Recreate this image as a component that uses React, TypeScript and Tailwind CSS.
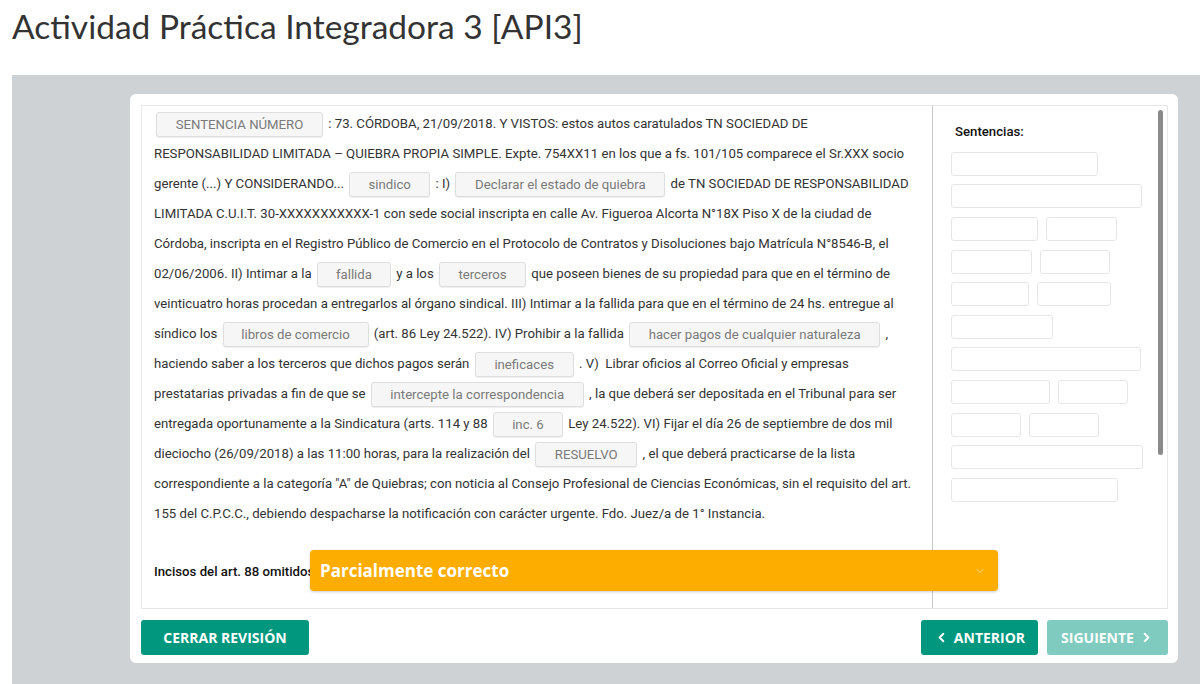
import React from "react";
import { ChevronDown, ChevronLeft, ChevronRight } from "lucide-react";

function Blank({ w, children }: { w: string; children: React.ReactNode }) {
  return (
    <span
      className={`${w} inline-block h-[25px] mx-[2px] rounded-[3px] border border-[#dedede] bg-[#f6f6f6] text-center leading-[23px] text-[#7a7a7a] align-middle shadow-[0_1px_1px_rgba(0,0,0,0.07)]`}
    >
      {children}
    </span>
  );
}

function Line({ children }: { children: React.ReactNode }) {
  return <div className="h-[30px] leading-[30px] whitespace-nowrap">{children}</div>;
}

const rows: string[][] = [
  ["w-[147px]"],
  ["w-[191px]"],
  ["w-[87px]", "w-[71px]"],
  ["w-[81px]", "w-[70px]"],
  ["w-[78px]", "w-[74px]"],
  ["w-[102px]"],
  ["w-[190px]"],
  ["w-[99px]", "w-[70px]"],
  ["w-[70px]", "w-[70px]"],
  ["w-[192px]"],
  ["w-[167px]"],
];

export default function App() {
  return (
    <div className="w-[1200px] h-[684px] overflow-hidden bg-white">
      <h1 className="pl-[12px] pt-[1px] h-[75px] font-['Lato',sans-serif] text-[33.5px] text-[#333333]">
        Actividad Práctica Integradora 3 [API3]
      </h1>

      <div className="ml-[12px] h-[609px] bg-[#cfd2d4] pt-[19px] pl-[118px]">
        <div className="w-[1048px] rounded-[6px] bg-white pt-[11px] pl-[11px] pr-[10px] pb-[8px]">
          {/* question box */}
          <div className="flex h-[504px] border border-[#e8e8e8] font-['Roboto',sans-serif] text-[13.2px] text-[#333333]">
            <div className="relative w-[791px] border-r border-[#c9c9c9] pl-[12px] pt-[3px]">
              <Line>
                <Blank w="w-[167px]">SENTENCIA NÚMERO</Blank> : 73. CÓRDOBA, 21/09/2018. Y VISTOS: estos autos caratulados TN SOCIEDAD DE
              </Line>
              <Line>
                RESPONSABILIDAD LIMITADA – QUIEBRA PROPIA SIMPLE. Expte. 754XX11 en los que a fs. 101/105 comparece el Sr.XXX socio
              </Line>
              <Line>
                gerente (...) Y CONSIDERANDO... <Blank w="w-[81px]">sindico</Blank> : I){" "}
                <Blank w="w-[210px]">Declarar el estado de quiebra</Blank> de TN SOCIEDAD DE RESPONSABILIDAD
              </Line>
              <Line>
                LIMITADA C.U.I.T. 30-XXXXXXXXXXX-1 con sede social inscripta en calle Av. Figueroa Alcorta N°18X Piso X de la ciudad de
              </Line>
              <Line>
                Córdoba, inscripta en el Registro Público de Comercio en el Protocolo de Contratos y Disoluciones bajo Matrícula N°8546-B, el
              </Line>
              <Line>
                02/06/2006. II) Intimar a la <Blank w="w-[74px]">fallida</Blank> y a los{" "}
                <Blank w="w-[87px]">terceros</Blank> que poseen bienes de su propiedad para que en el término de
              </Line>
              <Line>
                veinticuatro horas procedan a entregarlos al órgano sindical. III) Intimar a la fallida para que en el término de 24 hs. entregue al
              </Line>
              <Line>
                síndico los <Blank w="w-[146px]">libros de comercio</Blank> (art. 86 Ley 24.522). IV) Prohibir a la fallida{" "}
                <Blank w="w-[251px]">hacer pagos de cualquier naturaleza</Blank> ,
              </Line>
              <Line>
                haciendo saber a los terceros que dichos pagos serán <Blank w="w-[99px]">ineficaces</Blank> . V)&nbsp; Librar oficios al Correo Oficial y empresas
              </Line>
              <Line>
                prestatarias privadas a fin de que se <Blank w="w-[213px]">intercepte la correspondencia</Blank> , la que deberá ser depositada en el Tribunal para ser
              </Line>
              <Line>
                entregada oportunamente a la Sindicatura (arts. 114 y 88 <Blank w="w-[70px]">inc. 6</Blank> Ley 24.522). VI) Fijar el día 26 de septiembre de dos mil
              </Line>
              <Line>
                dieciocho (26/09/2018) a las 11:00 horas, para la realización del <Blank w="w-[102px]">RESUELVO</Blank> , el que deberá practicarse de la lista
              </Line>
              <Line>
                correspondiente a la categoría "A" de Quiebras; con noticia al Consejo Profesional de Ciencias Económicas, sin el requisito del art.
              </Line>
              <Line>155 del C.P.C.C., debiendo despacharse la notificación con carácter urgente. Fdo. Juez/a de 1° Instancia.</Line>

              <div className="mt-[28px] h-[30px] leading-[30px] font-medium text-[#111]">Incisos del art. 88 omitidos:</div>

              {/* feedback dropdown */}
              <div className="absolute left-[168px] top-[444px] flex h-[41px] w-[688px] items-center justify-between rounded-[4px] bg-[#fdad00] pl-[10px] pr-[12px] shadow-[0_1px_3px_rgba(0,0,0,0.2)]">
                <span className="font-['Open_Sans',sans-serif] text-[17px] font-bold text-white">Parcialmente correcto</span>
                <ChevronDown size={12} strokeWidth={1.5} className="text-white/70" />
              </div>
            </div>

            {/* answer bank */}
            <div className="relative flex-1 pl-[18px] pt-[16px]">
              <div className="pl-[4px] font-medium text-[#111]">Sentencias:</div>
              <div className="mt-[10px] flex flex-col gap-[8.6px]">
                {rows.map((r, i) => (
                  <div key={i} className="flex gap-[8px]">
                    {r.map((w, j) => (
                      <div key={j} className={`${w} h-[24px] rounded-[3px] border border-[#e6e6e6]`} />
                    ))}
                  </div>
                ))}
              </div>
              <div className="absolute right-[4px] top-[4px] h-[345px] w-[5px] rounded-full bg-[#8a8a8a]" />
            </div>
          </div>

          {/* footer buttons */}
          <div className="mt-[11px] flex justify-between font-['Open_Sans',sans-serif] text-[14px] font-bold text-white">
            <button className="h-[35px] w-[168px] rounded-[3px] bg-[#00977f]">CERRAR REVISIÓN</button>
            <div className="flex gap-[9px]">
              <button className="flex h-[35px] w-[117px] items-center justify-center gap-[5px] rounded-[3px] bg-[#00977f]">
                <ChevronLeft size={15} strokeWidth={3} />
                ANTERIOR
              </button>
              <button className="flex h-[35px] w-[121px] items-center justify-center gap-[5px] rounded-[3px] bg-[#80cbbf]">
                SIGUIENTE
                <ChevronRight size={15} strokeWidth={3} />
              </button>
            </div>
          </div>
        </div>
      </div>
    </div>
  );
}
